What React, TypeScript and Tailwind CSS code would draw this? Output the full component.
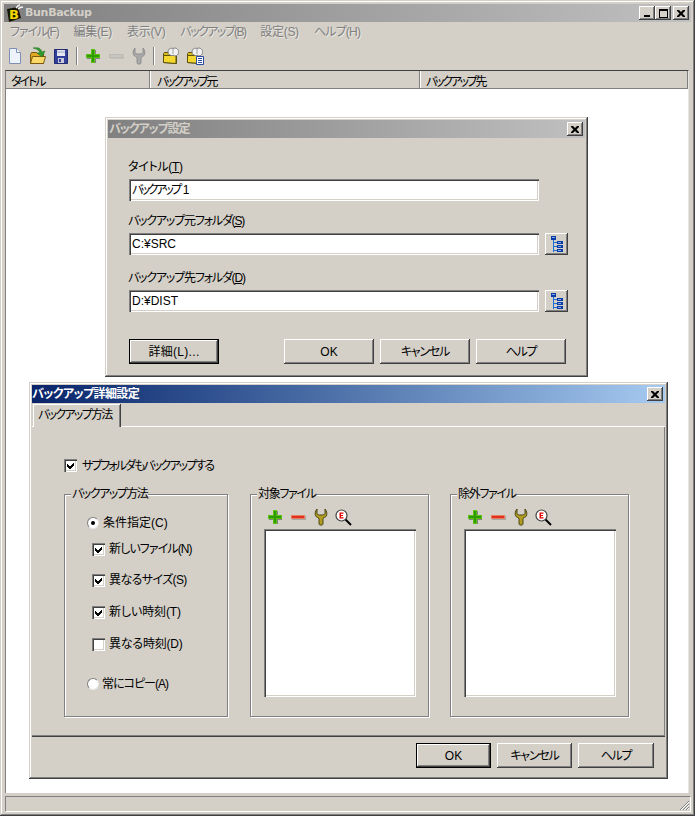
import React from "react";

const FACE = "bg-[#d4d0c8]";
const WINDOW = "bg-[#d4d0c8] shadow-[inset_-1px_-1px_#404040,inset_1px_1px_#d4d0c8,inset_-2px_-2px_#808080,inset_2px_2px_#fff]";
const RAISED = "bg-[#d4d0c8] shadow-[inset_-1px_-1px_#404040,inset_1px_1px_#fff,inset_-2px_-2px_#808080]";
const DEFAULT_BTN = "bg-[#d4d0c8] border border-black shadow-[inset_-1px_-1px_#404040,inset_1px_1px_#fff,inset_-2px_-2px_#808080]";
const SUNKEN = "bg-white shadow-[inset_1px_1px_#808080,inset_2px_2px_#404040,inset_-1px_-1px_#fff,inset_-2px_-2px_#d4d0c8]";
const FONT = "font-['Liberation_Sans','Noto_Sans_CJK_JP',sans-serif] [font-feature-settings:'palt'] text-[12px] leading-[14px] text-black";

function CloseGlyph() {
  return (
    <svg width="8" height="7" viewBox="0 0 8 7"><path d="M0 0h2l2 2 2-2h2v1L5.500 3.500 8 6v1H6L4 5 2 7H0V6l2.500-2.500L0 1z" fill="#000" /></svg>
  );
}

function CapButton({ children, className = "" }: { children: React.ReactNode; className?: string }) {
  return <div className={`${RAISED} w-4 h-[14px] flex items-center justify-center ${className}`}>{children}</div>;
}

function Logo() {
  return (
    <svg width="18" height="18" viewBox="0 0 18 18" className="shrink-0">
      <path d="M1 5l11-2 3 11-12 4z" fill="#141400" />
      <path d="M10 4c1-1 2-3 4-3M12 5c1-1 3-2 5-2" stroke="#f4f4f4" strokeWidth="1.600" fill="none" />
      <text x="3" y="15" fontSize="13" fontWeight="700" fill="#f0d800" fontFamily="'DejaVu Sans',sans-serif">B</text>
    </svg>
  );
}

function NewFile() {
  return (
    <svg width="16" height="18" viewBox="0 0 16 18">
      <path d="M2.500 1.500h7l4 4v11h-11z" fill="#eef3fb" stroke="#7f8fb5" />
      <path d="M9.500 1.500v4h4" fill="#fff" stroke="#7f8fb5" />
    </svg>
  );
}

function OpenFolder() {
  return (
    <svg width="18" height="18" viewBox="0 0 18 18">
      <path d="M1.500 7.500l1-2h5l1 1h6v10h-13z" fill="#e0a820" stroke="#7a5a10" />
      <path d="M1.500 16.500l2-7h13l-2 7z" fill="#fbd968" stroke="#7a5a10" />
      <path d="M4 1c5-1 8 0 9 4l3-1-3 6-5-4 3-.5C10 3 8 2 4 1z" fill="#2f9a2f" stroke="#1f6f1f" strokeWidth=".5" />
    </svg>
  );
}

function Floppy() {
  return (
    <svg width="14" height="16" viewBox="0 0 14 16">
      <path d="M.500 1.500h13v14H.500z" fill="#33409a" stroke="#1f2a70" />
      <rect x="3" y="2" width="8" height="6" fill="#e6e6f0" />
      <rect x="3" y="3.500" width="8" height="1" fill="#9aa0c8" />
      <rect x="4" y="10" width="6" height="5" fill="#c8c8d8" />
      <rect x="5" y="11" width="2" height="3" fill="#33409a" />
    </svg>
  );
}

function Plus() {
  return (
    <svg width="16" height="16" viewBox="0 0 16 16">
      <path d="M7 2h4v5h4v4h-4v4H7v-4H2V7h5z" fill="#808080" />
      <path d="M6 1h4v5h5v4h-5v5H6v-5H1V6h5z" fill="#5cc010" />
      <path d="M7 2h2v5h5v2H9v5H7V9H2V7h5z" fill="#2e9c00" />
    </svg>
  );
}

function Minus({ gray = false }: { gray?: boolean }) {
  return (
    <svg width="16" height="16" viewBox="0 0 16 16">
      <rect x="2" y="7" width="14" height="4" fill={gray ? "#c4c0b8" : "#a8a8a8"} />
      <rect x="1" y="6" width="14" height="4" fill={gray ? "#bcbab4" : "#e88060"} />
      <rect x="2" y="7" width="12" height="2" fill={gray ? "#c8c6c0" : "#e03020"} />
    </svg>
  );
}

function Wrench({ gray = false }: { gray?: boolean }) {
  const f = gray ? "#a8a8a8" : "#b09c20";
  const s = gray ? "#8c8c8c" : "#403c10";
  return (
    <svg width="14" height="18" viewBox="0 0 14 18">
      <path d="M3 1C1 3 .500 6.500 2 8.500c1 1 2 1 3 2V16c0 1.500 4 1.500 4 0v-5.500c1-1 2-1 3-2 1.500-2 1-5.500-1-7.500v4.500C11 6.500 9.500 7 7 7S3 6.500 3 5.500z" fill={f} stroke={s} strokeWidth=".9" />
    </svg>
  );
}

function Magnifier() {
  return (
    <svg width="17" height="17" viewBox="0 0 17 17">
      <path d="M10 10l6 6" stroke="#000" strokeWidth="2" />
      <circle cx="6.500" cy="6.500" r="5.500" fill="#fff" stroke="#404040" strokeWidth="1.200" />
      <path d="M4.500 3.500h4v1.300H6v1.100h2v1.200H6v1.100h2.500v1.300h-4z" fill="#e80000" />
    </svg>
  );
}

function CloudFolder({ doc = false }: { doc?: boolean }) {
  return (
    <svg width="18" height="18" viewBox="0 0 18 18">
      <path d="M1.500 6.500l1-1h4l1 1h7v10l-13-1z" fill="#d8b818" stroke="#5a5010" />
      <path d="M1.500 8.500h12.500v8l-12.500-1z" fill="#f4d830" stroke="#5a5010" />
      <path d="M6 5c0-3 3-4.500 5-3.500 3-1.500 6 1 5.500 4 0 3-3 4-5 3-3 .500-5.500-1-5.500-3.500z" fill="#f2f2f2" stroke="#808080" />
      <path d="M11 2v5" stroke="#a0a0a0" />
      {doc && <path d="M10.500 9.500h7v8h-7z" fill="#fff" stroke="#2a4aa0" />}
      {doc && <path d="M12 11.500h4M12 13.500h4M12 15.500h4" stroke="#2a4aa0" />}
    </svg>
  );
}

function TreeIcon() {
  return (
    <svg width="12" height="17" viewBox="0 0 12 17" shapeRendering="crispEdges">
      <path d="M2.500 4v12M2.500 6.500h4M2.500 10.500h4M2.500 14.500h4" stroke="#2070d8" fill="none" />
      <rect x="0" y="0" width="5" height="4" fill="#0a3ca8" /><rect x="1" y="1" width="3" height="1" fill="#80a8e8" />
      {[5, 9, 13].map((y) => (
        <React.Fragment key={y}>
          <rect x="6" y={y} width="6" height="3" fill="#0a3ca8" />
          <rect x="7" y={y + 1} width="3" height="1" fill="#80a8e8" />
        </React.Fragment>
      ))}
    </svg>
  );
}

function Check({ checked }: { checked: boolean }) {
  return (
    <div className={`w-[13px] h-[13px] shrink-0 flex items-center justify-center ${SUNKEN}`}>
      {checked && (
        <svg width="7" height="7" viewBox="0 0 7 7" shapeRendering="crispEdges"><path d="M0 2v3l2 2h1l4-4V0L2.500 4.500z" fill="#000" /></svg>
      )}
    </div>
  );
}

function Radio({ checked }: { checked: boolean }) {
  return (
    <div className="w-3 h-3 shrink-0 rounded-full bg-white border border-[#808080] border-r-[#e8e8e8] border-b-[#e8e8e8] flex items-center justify-center">
      {checked && <div className="w-1 h-1 rounded-full bg-black" />}
    </div>
  );
}

function Separator() {
  return <div className="w-[2px] h-[18px] border-l border-[#808080] border-r-1 border-r-white" />;
}

function DialogButton({ children, main = false, className = "" }: { children: React.ReactNode; main?: boolean; className?: string }) {
  return <div className={`${main ? DEFAULT_BTN : RAISED} h-[25px] flex items-center justify-center ${className}`}>{children}</div>;
}

function Labeled({ label, mnemonic, value, labelTracking, browse = false, className = "" }: { label: string; mnemonic: string; value: React.ReactNode; labelTracking: string; browse?: boolean; className?: string }) {
  return (
    <div className={`flex flex-col ${className}`}>
      <div className={`h-[14px] ${labelTracking}`}>
        {label}(<span className="underline">{mnemonic}</span>)
      </div>
      <div className="flex mt-[5px] gap-[6px]">
        <div className={`${SUNKEN} w-[410px] ml-px h-[22px] pl-[3px] flex items-center`}>{value}</div>
        {browse && <div className={`${RAISED} w-[23px] h-[22px] flex items-center justify-center`}><TreeIcon /></div>}
      </div>
    </div>
  );
}

function GroupBox({ title, className = "", children, legendClass = "tracking-[-1.300px]" }: { title: string; className?: string; children: React.ReactNode; legendClass?: string }) {
  return (
    <div className={`relative h-[223px] border border-[#808080] shadow-[inset_1px_1px_#fff,1px_1px_#fff] ${className}`}>
      <span className={`absolute left-[6px] top-[-8px] ${FACE} px-[1px] ${legendClass}`}>{title}</span>
      {children}
    </div>
  );
}

function FileGroup({ title }: { title: string }) {
  return (
    <GroupBox title={title} className="w-[179px] pl-[13px] pt-[12px]">
      <div className="flex items-center h-[20px] pl-[3px] gap-[7px]">
        <Plus /><Minus /><div className="ml-px"><Wrench /></div><Magnifier />
      </div>
      <div className={`${SUNKEN} w-[152px] h-[168px] mt-[2px]`} />
    </GroupBox>
  );
}

function OptionRow({ label, checked, tracking, className = "" }: { label: string; checked: boolean; tracking: string; className?: string }) {
  return (
    <div className={`flex items-center gap-[4px] h-[14px] ${className}`}>
      <Check checked={checked} />
      <span className={tracking}>{label}</span>
    </div>
  );
}

export default function App() {
  return (
    <div className={`${FONT} ${WINDOW} relative w-[695px] h-[816px] overflow-hidden p-1 flex flex-col`}>
      <div className="h-[18px] shrink-0 bg-gradient-to-r from-[#808080] to-[#c0c0c0] flex items-center pl-[2px] pr-[2px]">
        <Logo />
        <span className="ml-[1px] font-['DejaVu_Sans',sans-serif] font-bold text-[11px] tracking-[-.300px] text-[#d4d0c8]">BunBackup</span>
        <div className="ml-auto flex">
          <CapButton><div className="w-[6px] h-[2px] bg-black mt-[6px] mr-[1px]" /></CapButton>
          <CapButton><div className="w-[9px] h-[9px] border border-black border-t-2" /></CapButton>
          <CapButton className="ml-[2px]"><CloseGlyph /></CapButton>
        </div>
      </div>

      <div className="h-[20px] shrink-0 flex items-center pl-[6px] gap-[15px] text-[#808080] [text-shadow:1px_1px_0_#e8e6e0]">
        <span className="tracking-[-1.200px]">ファイル(F)</span>
        <span className="tracking-[-.300px]">編集(E)</span>
        <span className="tracking-[-.300px]">表示(V)</span>
        <span className="tracking-[-1.600px]">バックアップ(B)</span>
        <span className="tracking-[-.300px]">設定(S)</span>
        <span className="tracking-[-.800px]">ヘルプ(H)</span>
      </div>

      <div className="h-[28px] shrink-0 flex items-center pl-[3px]">
        <NewFile />
        <div className="ml-[6px]"><OpenFolder /></div>
        <div className="ml-[7px]"><Floppy /></div>
        <div className="ml-[8px]"><Separator /></div>
        <div className="ml-[7px]"><Plus /></div>
        <div className="ml-[7px]"><Minus gray /></div>
        <div className="ml-[8px]"><Wrench gray /></div>
        <div className="ml-[7px]"><Separator /></div>
        <div className="ml-[7px]"><CloudFolder /></div>
        <div className="ml-[6px]"><CloudFolder doc /></div>
      </div>

      <div className="flex-1 min-h-0 ml-px mr-[2px] bg-white border-t border-l border-[#808080] border-t-[#404040] border-r border-r-[#e8e6e0]">
        <div className={`${FACE} h-[18px] flex border-b border-[#808080]`}>
          <div className="w-[144px] pl-[5px] pt-[4px] border-r border-[#808080] tracking-[-2px]">タイトル</div>
          <div className="w-[270px] pl-[6px] pt-[4px] border-l border-white border-r border-r-[#808080] tracking-[-2.300px]">バックアップ元</div>
          <div className="flex-1 pl-[5px] pt-[4px] border-l border-white border-r border-r-[#808080] tracking-[-2.300px]">バックアップ先</div>
        </div>
      </div>

      <div className="mt-[3px] mx-0 h-[16px] shrink-0 relative border-t border-l border-[#808080] border-b border-b-white border-r border-r-white ml-px">
        <svg width="12" height="12" viewBox="0 0 12 12" className="absolute right-0 bottom-0">
          <path d="M11 2L2 11M11 5L5 11M11 8L8 11" stroke="#808080" fill="none" />
          <path d="M11 3L3 11M11 6L6 11M11 9L9 11" stroke="#fff" fill="none" />
        </svg>
      </div>

      {/* Backup settings dialog */}
      <div className={`absolute left-[105px] top-[117px] w-[483px] h-[260px] p-[3px] flex flex-col ${WINDOW}`}>
        <div className="h-[18px] shrink-0 bg-gradient-to-r from-[#808080] to-[#c0c0c0] flex items-center pl-[1px] pr-[2px]">
          <span className="font-bold text-[#d4d0c8] tracking-[-1.100px]">バックアップ設定</span>
          <CapButton className="ml-auto"><CloseGlyph /></CapButton>
        </div>
        <div className="pl-[20px] pt-[22px] flex flex-col">
          <Labeled label="タイトル" mnemonic="T" value={<><span className="tracking-[-2.600px]">バックアップ</span><span className="ml-[3px]">1</span></>} labelTracking="tracking-[-.300px]" />
          <Labeled label="バックアップ元フォルダ" mnemonic="S" value="C:¥SRC" labelTracking="tracking-[-1.200px]" browse className="mt-[13px]" />
          <Labeled label="バックアップ先フォルダ" mnemonic="D" value="D:¥DIST" labelTracking="tracking-[-1.200px]" browse className="mt-[16px]" />
          <div className="flex mt-[27px] ml-px">
            <DialogButton main className="w-[90px] tracking-[.3px]">詳細(L)...</DialogButton>
            <DialogButton className="w-[90px] ml-[65px]">OK</DialogButton>
            <DialogButton className="w-[90px] ml-[6px] tracking-[-1.200px]">キャンセル</DialogButton>
            <DialogButton className="w-[90px] ml-[6px] tracking-[-1.200px]">ヘルプ</DialogButton>
          </div>
        </div>
      </div>

      {/* Backup detail dialog */}
      <div className={`absolute left-[29px] top-[382px] w-[639px] h-[397px] p-[3px] flex flex-col ${WINDOW}`}>
        <div className="h-[18px] shrink-0 bg-gradient-to-r from-[#0a246a] to-[#a6caf0] flex items-center pl-[0px] pr-[2px]">
          <span className="font-bold text-white tracking-[-.600px]">バックアップ詳細設定</span>
          <CapButton className="ml-auto"><CloseGlyph /></CapButton>
        </div>

        <div className="h-[22px] shrink-0 pl-[1px] relative z-10 mt-[1px]">
          <div className={`w-[87px] h-[23px] pl-[5px] pt-[4px] tracking-[-1.700px] ${FACE} shadow-[inset_1px_1px_#fff,inset_-1px_0_#808080,1px_0_#404040]`}>バックアップ方法</div>
        </div>

        <div className="h-[311px] shrink-0 border-b border-[#404040] shadow-[inset_0_1px_#fff,inset_-1px_0_#808080,inset_0_-1px_#808080] pl-[32px] pt-[33px]">
          <div className="flex items-center h-[13px] gap-[5px]">
            <Check checked />
            <span className="tracking-[-1.900px]">サブフォルダもバックアップする</span>
          </div>
          <div className="flex mt-[22px]">
            <GroupBox title="バックアップ方法" className="w-[164px] pl-[22px] pt-[21px]" legendClass="tracking-[-1.500px]">
              <div className="flex items-center gap-[4px] h-[14px]">
                <Radio checked />
                <span className="tracking-[0px]">条件指定(C)</span>
              </div>
              <OptionRow label="新しいファイル(N)" tracking="tracking-[-.900px]" checked className="ml-[5px] mt-[12px]" />
              <OptionRow label="異なるサイズ(S)" tracking="tracking-[-.600px]" checked className="ml-[5px] mt-[17px]" />
              <OptionRow label="新しい時刻(T)" tracking="tracking-[-.100px]" checked className="ml-[5px] mt-[18px]" />
              <OptionRow label="異なる時刻(D)" tracking="tracking-[-.200px]" checked={false} className="ml-[5px] mt-[18px]" />
              <div className="flex items-center gap-[3px] h-[14px] mt-[26px]">
                <Radio checked={false} />
                <span className="tracking-[-1px]">常にコピー(A)</span>
              </div>
            </GroupBox>
            <div className="flex ml-[22px] gap-[21px]">
              <FileGroup title="対象ファイル" />
              <FileGroup title="除外ファイル" />
            </div>
          </div>
        </div>

        <div className="flex pt-[6px] pl-[384px]">
          <DialogButton main className="w-[75px]">OK</DialogButton>
          <DialogButton className="w-[75px] ml-[6px] tracking-[-1.200px]">キャンセル</DialogButton>
          <DialogButton className="w-[76px] ml-[6px] tracking-[-1.200px]">ヘルプ</DialogButton>
        </div>
      </div>
    </div>
  );
}
